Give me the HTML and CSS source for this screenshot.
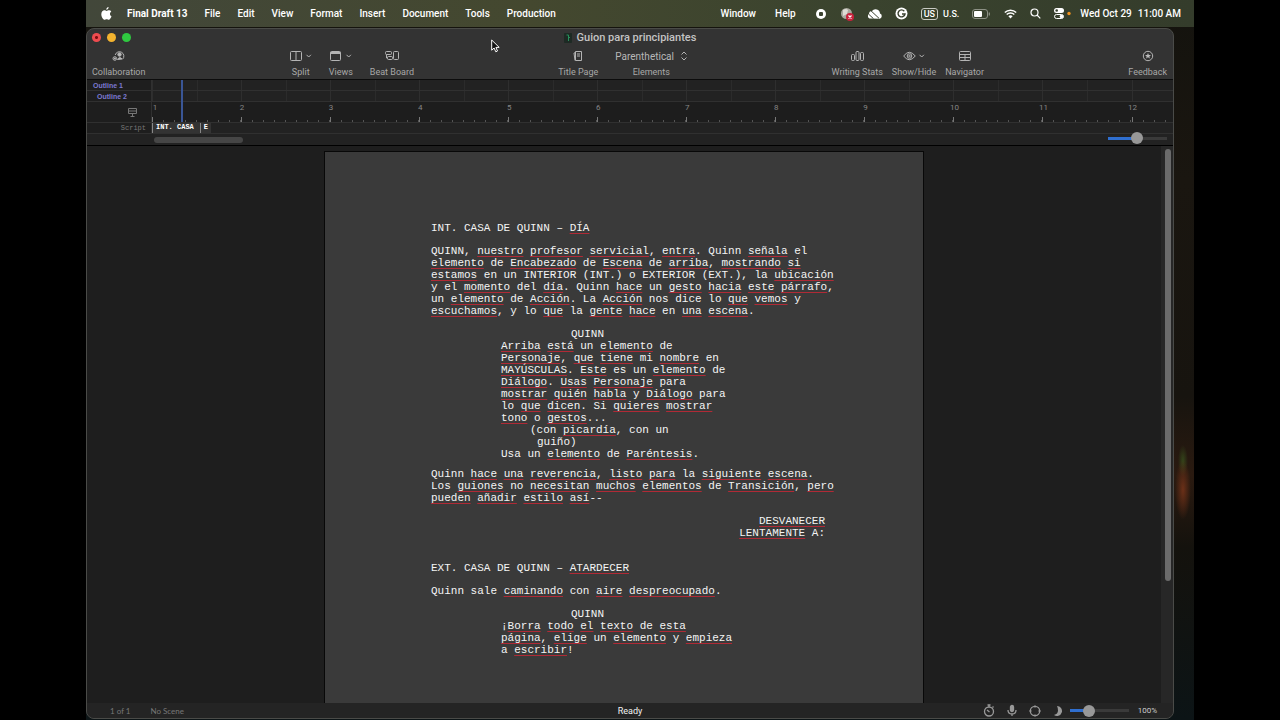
FILE: index.html
```html
<!DOCTYPE html>
<html lang="es">
<head>
  <meta charset="UTF-8">
  <title>Guion para principiantes</title>
  <link rel="stylesheet" href="styles.css">
</head>
<body>
  <div class="desktop">
    <!-- Menu bar -->
    <header class="menubar">
      <nav class="menus">
        <button aria-label="Apple"><svg class="apple" width="11" height="13" viewBox="0 0 11 13"><path d="M7.6 0c.1 1.400-1 2.800-2.300 2.800C5.100 1.500 6.300.2 7.600 0zM10.500 9.200c-.5 1.500-1.600 3.500-2.800 3.500-.8 0-1.100-.5-2.100-.5s-1.300.5-2 .5C2.200 12.700.3 10 .3 7.200.3 4.600 1.900 3.300 3.400 3.300c.9 0 1.600.6 2.200.6.6 0 1.400-.7 2.600-.7.8 0 1.600.4 2.100 1.200-1.900 1.200-1.600 3.900.2 4.800z" fill="#fff"/></svg></button>
        <button class="app">Final Draft 13</button>
        <button>File</button>
        <button>Edit</button>
        <button>View</button>
        <button>Format</button>
        <button>Insert</button>
        <button>Document</button>
        <button>Tools</button>
        <button>Production</button>
      </nav>
      <div class="tray">
        <button>Window</button>
        <button>Help</button>
        <svg width="12" height="12" viewBox="0 0 12 12"><circle cx="6" cy="6" r="5" fill="#fff"/><rect x="4" y="4" width="4" height="4" rx="1" fill="#3b4230"/></svg>
        <svg width="14" height="14" viewBox="0 0 14 14"><circle cx="6.500" cy="6.500" r="5.500" fill="#aaa9a0"/><path d="M3 3q3-2 5 0l-1 4-4 2z" fill="#dedbd4"/><circle cx="10" cy="10" r="4" fill="#c9213b"/><path d="M8.500 8.500l3 3m0-3l-3 3" stroke="#fff" stroke-width="1.200"/></svg>
        <svg width="15" height="12" viewBox="0 0 15 12"><path d="M2.500 10.500A2.600 2.600 0 012 6a3 3 0 013-3 4.500 4.500 0 018 2.500 2.700 2.700 0 01-.5 5.200z" fill="#fff"/><path d="M4 2.800l8 7.500M2 6.500l4.500 4.200" stroke="#3b4230" stroke-width="1"/></svg>
        <svg width="13" height="13" viewBox="0 0 13 13"><circle cx="6.500" cy="6.500" r="6" fill="#fff"/><path d="M9.300 4.200A3.500 3.500 0 1010 7H7" stroke="#3b4230" stroke-width="1.400" fill="none"/></svg>
        <span class="input-source"><b>US</b>U.S.</span>
        <svg width="19" height="10" viewBox="0 0 19 10"><rect x=".5" y=".5" width="15" height="9" rx="2.500" fill="none" stroke="#8d9185"/><rect x="2" y="2" width="8" height="6" rx="1" fill="#fff"/><path d="M17.300 3.500v3" stroke="#8d9185" stroke-width="1.200"/></svg>
        <svg width="13" height="10" viewBox="0 0 13 10"><path d="M.8 3.500a8.200 8.200 0 0111.400 0M2.700 5.500a5.500 5.500 0 017.600 0" stroke="#fff" stroke-width="1.500" fill="none"/><path d="M4.400 7.300a3 3 0 014.200 0L6.500 9.500z" fill="#fff"/></svg>
        <svg width="11" height="11" viewBox="0 0 11 11" fill="none" stroke="#fff" stroke-width="1.200"><circle cx="4.500" cy="4.500" r="3.500"/><path d="M7 7l3.300 3.300"/></svg>
        <svg width="17" height="11" viewBox="0 0 17 11"><rect x="0" y="0" width="10" height="5" rx="2.500" fill="#fff"/><circle cx="2.700" cy="2.500" r="1.300" fill="#3b4230"/><rect x=".5" y="6.500" width="9" height="4" rx="2" fill="none" stroke="#fff"/><circle cx="7.500" cy="8.500" r="1.800" fill="#fff"/><circle cx="15" cy="5.500" r="1.700" fill="#f2931e"/></svg>
        <span class="clock"><span>Wed Oct 29</span><span>11:00 AM</span></span>
      </div>
    </header>

    <main class="window">
      <div class="titlebar">
        <div class="lights">
          <button class="light close" aria-label="Close"></button>
          <button class="light minimize" aria-label="Minimize"></button>
          <button class="light zoom" aria-label="Zoom"></button>
        </div>
        <h1 class="title"><svg width="8" height="10" viewBox="0 0 8 10"><rect width="8" height="10" rx="1" fill="#1d2a24"/><path d="M2.500 2h2v6M4.500 4.500h1.500" stroke="#27905b" fill="none"/></svg>Guion para principiantes</h1>
      </div>

      <!-- Toolbar -->
      <div class="toolbar">
        <div class="tools">
          <button class="tool"><svg width="13" height="12" viewBox="0 0 13 12"><path d="M3.200 5A4.400 4.400 0 1110.500 9.300"/><circle cx="7.500" cy="4.500" r="1.700" fill="#bbb"/><path d="M5.500 9.500q2-3.500 4.500-.5z" fill="#bbb"/><circle cx="2.800" cy="8.500" r="1.800"/><path d="M2.800 7.500v2M1.800 8.500h2"/></svg>Collaboration</button>
        </div>
        <div class="tools">
          <button class="tool"><svg width="22" height="12" viewBox="0 0 22 12"><rect x=".5" y="1.500" width="11" height="9" rx="1"/><path d="M6 1.500v9M16.500 4.800l2.200 2.200 2.200-2.200"/></svg>Split</button>
          <button class="tool"><svg width="22" height="12" viewBox="0 0 22 12"><rect x=".5" y="1.500" width="10" height="9" rx="1"/><path d="M.5 3h10" stroke-width="2"/><path d="M16.500 4.800l2.200 2.200 2.200-2.200"/></svg>Views</button>
          <button class="tool"><svg width="14" height="12" viewBox="0 0 14 12"><rect x=".5" y="1.500" width="6" height="3" rx="1"/><rect x="8.500" y="1.500" width="5" height="8" rx="1"/><rect x="2.500" y="6.500" width="5" height="3" rx="1"/><path d="M1.500 4.500v3.500h1"/></svg>Beat Board</button>
        </div>
        <div class="tools">
          <button class="tool"><svg width="10" height="12" viewBox="0 0 10 12"><path d="M2.500 1.500h6v9h-6zM2.500 2.500l-1.500.5 1 7.500M4 4h3M4 6h3"/></svg>Title Page</button>
          <div class="tool element">
            <span class="picker">
              <select id="element"><option>Parenthetical</option><option>Action</option><option>Dialogue</option></select>
              <svg width="6" height="12" viewBox="0 0 6 12"><path d="M.5 4.500L3 2l2.500 2.500M.5 7.500L3 10l2.500-2.500"/></svg>
            </span>
            <label for="element">Elements</label>
          </div>
        </div>
        <div class="tools stats">
          <button class="tool"><svg width="13" height="12" viewBox="0 0 13 12"><rect x=".5" y="4.500" width="3" height="6" rx="1"/><rect x="5" y="1.500" width="3" height="9" rx="1"/><rect x="9.500" y="2.500" width="3" height="8" rx="1"/></svg>Writing Stats</button>
          <button class="tool"><svg width="22" height="12" viewBox="0 0 22 12"><path d="M.7 6q5.300-7.500 11.600 0-6.300 7.500-11.600 0z"/><circle cx="6.500" cy="6" r="2.300"/><circle cx="6.500" cy="6" r=".8"/><path d="M16.500 4.800l2.200 2.200 2.200-2.200"/></svg>Show/Hide</button>
          <button class="tool"><svg width="12" height="12" viewBox="0 0 12 12"><rect x=".5" y="1.500" width="11" height="9" rx="1"/><path d="M.5 4.500h11M.5 7.500h11M6 4.500v6"/></svg>Navigator</button>
        </div>
        <div class="tools">
          <button class="tool"><svg width="12" height="12" viewBox="0 0 12 12"><circle cx="6" cy="6" r="4.700"/><path d="M6 3l.8 2 2.200.1-1.700 1.300.6 2.100L6 7.300 4.100 8.500l.6-2.100L3 5.100 5.200 5z" fill="#bbb" stroke="none"/></svg>Feedback</button>
        </div>
      </div>

      <!-- Outline timeline -->
      <section class="timeline">
        <div class="lane"><div class="lane-name outline">Outline 1</div><div class="track beats" id="beats1"></div></div>
        <div class="lane"><div class="lane-name outline second">Outline 2</div><div class="track beats" id="beats2"></div></div>
        <div class="lane ruler">
          <div class="lane-name"><svg width="9" height="9" viewBox="0 0 9 9" fill="none" stroke="#777"><path d="M.5.5h8v5h-8zM.5 3h8M4.500 5.500v3M2.500 8.500h4"/></svg></div>
          <div class="track" id="ruler"></div>
        </div>
        <div class="lane">
          <div class="lane-name script">Script</div>
          <div class="track scenes"><span class="scene wide">INT. CASA</span><span class="scene">E</span></div>
        </div>
        <div class="timeline-foot">
          <div class="hscroll"></div>
          <input class="slider" type="range" min="0" max="100" value="48" aria-label="Timeline zoom">
        </div>
        <div class="playhead"></div>
      </section>

      <div class="editor">
        <article class="paper">
          <p class="heading">INT. CASA DE QUINN – <u>DÍA</u></p>
          <p class="action">QUINN, <u>nuestro</u> <u>profesor</u> <u>servicial</u>, <u>entra</u>. Quinn <u>señala</u> el<br>
            <u>elemento</u> de <u>Encabezado</u> de <u>Escena</u> de <u>arriba</u>, <u>mostrando</u> <u>si</u><br>
            <u>estamos</u> en un INTERIOR (INT.) o EXTERIOR (EXT.), la <u>ubicación</u><br>
            y el <u>momento</u> del <u>día</u>. Quinn <u>hace</u> un <u>gesto</u> <u>hacia</u> <u>este</u> <u>párrafo</u>,<br>
            un <u>elemento</u> de <u>Acción</u>. La <u>Acción</u> nos dice lo <u>que</u> <u>vemos</u> y<br>
            <u>escuchamos</u>, y lo <u>que</u> la <u>gente</u> <u>hace</u> en <u>una</u> <u>escena</u>.</p>
          <p class="character">QUINN</p>
          <p class="dialogue"><u>Arriba</u> <u>está</u> un <u>elemento</u> de<br>
            <u>Personaje</u>, <u>que</u> <u>tiene</u> mi <u>nombre</u> en<br>
            <u>MAYÚSCULAS</u>. <u>Este</u> es un <u>elemento</u> de<br>
            <u>Diálogo</u>. <u>Usas</u> <u>Personaje</u> para<br>
            <u>mostrar</u> <u>quién</u> <u>habla</u> y <u>Diálogo</u> para<br>
            lo <u>que</u> <u>dicen</u>. Si <u>quieres</u> <u>mostrar</u><br>
            <u>tono</u> o <u>gestos</u>...</p>
          <p class="parenthetical">(con <u>picardía</u>, con un<br>guiño)</p>
          <p class="dialogue last">Usa un <u>elemento</u> de <u>Paréntesis</u>.</p>
          <p class="action">Quinn <u>hace</u> <u>una</u> <u>reverencia</u>, <u>listo</u> <u>para</u> la <u>siguiente</u> <u>escena</u>.<br>
            Los <u>guiones</u> no <u>necesitan</u> <u>muchos</u> <u>elementos</u> de <u>Transición</u>, <u>pero</u><br>
            <u>pueden</u> <u>añadir</u> <u>estilo</u> <u>así</u>--</p>
          <p class="transition"><u>DESVANECER</u><br><u>LENTAMENTE</u> A:</p>
          <p class="heading">EXT. CASA DE QUINN – <u>ATARDECER</u></p>
          <p class="action">Quinn sale <u>caminando</u> con <u>aire</u> <u>despreocupado</u>.</p>
          <p class="character">QUINN</p>
          <p class="dialogue">¡<u>Borra</u> <u>todo</u> <u>el</u> <u>texto</u> de <u>esta</u><br>
            <u>página</u>, <u>elige</u> un <u>elemento</u> y <u>empieza</u><br>
            a <u>escribir</u>!</p>
        </article>
        <div class="vscroll"><div class="vthumb"></div></div>
      </div>

      <footer class="status">
        <div class="status-left"><span>1 of 1</span><span>No Scene</span></div>
        <div class="ready">Ready</div>
        <div class="status-right">
          <button aria-label="Timer"><svg width="12" height="13" viewBox="0 0 12 13" fill="none" stroke="#999" stroke-width="1.300"><circle cx="6" cy="7.500" r="4.500"/><path d="M6 3V1M4.500 1h3M9.500 3.500l1-1M4 6l2.500 2"/></svg></button>
          <button aria-label="Dictation"><svg width="12" height="13" viewBox="0 0 12 13" fill="none" stroke="#999" stroke-width="1.300"><rect x="4.500" y="1.500" width="3" height="6" rx="1.500" fill="#999"/><path d="M2 6q0 4 4 4t4-4M6 10v2"/></svg></button>
          <button aria-label="Focus"><svg width="12" height="13" viewBox="0 0 12 13" fill="none" stroke="#999" stroke-width="1.300"><circle cx="6" cy="7" r="4.700"/><path d="M6 1.500v2M6 10.500v2M.5 7h2M9.500 7h2"/></svg></button>
          <button aria-label="Night mode"><svg width="12" height="13" viewBox="0 0 12 13"><path d="M5 2a5 5 0 11-3 9q4-1 4-4.500Q6 4 5 2z" fill="#999"/></svg></button>
          <input class="slider zoom-slider" type="range" min="0" max="100" value="28" aria-label="Zoom">
          <span class="percent">100%</span>
        </div>
      </footer>
    </main>

    <svg class="cursor" width="9" height="14" viewBox="0 0 9 14"><path d="M.7 1v10.200l2.400-2.200 1.700 3.800 1.700-.8-1.600-3.600h3.300z" fill="#111" stroke="#fff"/></svg>
  </div>

  <script>
    const bars = 12;

    function fillTrack(id, numbered) {
      const track = document.getElementById(id);
      for (let i = 1; i <= bars; i++) {
        const bar = document.createElement("div");
        bar.classList.add("bar");
        if (numbered) {
          const num = document.createElement("span");
          num.textContent = i;
          bar.appendChild(num);
        }
        track.appendChild(bar);
      }
    }

    fillTrack("beats1", false);
    fillTrack("beats2", false);
    fillTrack("ruler", true);
  </script>
</body>
</html>
```
FILE: styles.css
```css
* {
  box-sizing: border-box;
}

body {
  margin: 0;
  background: #000;
  color: #fff;
  font-family: Roboto, "Liberation Sans", sans-serif;
  font-size: 10px;
  overflow: hidden;
}

button {
  padding: 0;
  border: none;
  background: none;
  color: inherit;
  font: inherit;
}

svg {
  display: block;
  flex-shrink: 0;
}

.desktop {
  position: relative;
  display: flex;
  flex-direction: column;
  height: 100vh;
  margin: 0 86px;
  background:
    radial-gradient(8px 30px at 99% 68%, #6b3018, transparent),
    radial-gradient(5px 16px at 99% 64%, #33441a, transparent),
    linear-gradient(180deg, #14130e 0%, #1a1610 25%, #17140f 55%, #2a1a10 66%, #14120d 76%, #0c1416 100%);
}

.menubar {
  display: flex;
  justify-content: space-between;
  align-items: center;
  height: 27px;
  padding: 0 13px 0 15px;
  background: linear-gradient(90deg, #42473a, #44482f 40%, #3a432e 70%, #343c2b);
  font-weight: 500;
}

.menus {
  display: flex;
  align-items: center;
  gap: 17px;
}

.menus .app {
  font-weight: 700;
  margin-left: -2px;
}

.tray {
  display: flex;
  align-items: center;
  gap: 13px;
}

.tray button {
  margin-right: 6px;
}

.input-source {
  display: flex;
  align-items: center;
  gap: 5px;
  font-size: 9px;
}

.input-source b {
  padding: 0 2px;
  border: 1px solid #c9cbc4;
  border-radius: 3px;
  font-weight: 500;
}

.clock {
  display: flex;
  gap: 6px;
  margin-left: -4px;
}

.window {
  display: flex;
  flex-direction: column;
  flex: 1;
  min-height: 0;
  margin: 1px 20px 1px 0;
  border: 1px solid #4a4b48;
  border-radius: 8px;
  background: #333;
  overflow: hidden;
}

.titlebar {
  display: grid;
  grid-template-columns: 1fr auto 1fr;
  align-items: center;
  height: 17px;
  padding: 0 5px;
}

.lights {
  display: flex;
  gap: 6px;
}

.light {
  width: 9px;
  height: 9px;
  border-radius: 50%;
}

.close {
  background: radial-gradient(#7a0b10 0 1px, #ee4b4f 2px);
}

.minimize {
  background: #f3b32f;
}

.light.zoom {
  background: #2fc840;
}

.title {
  display: flex;
  align-items: center;
  gap: 5px;
  margin: 0;
  color: #c4c4c4;
  font-size: 11px;
  font-weight: 500;
}

/* Toolbar */
.toolbar {
  display: flex;
  justify-content: space-between;
  height: 34px;
  padding: 4px 6px 0 5px;
  border-bottom: 1px solid #0c0c0c;
  color: #a8a8a8;
  font-size: 9px;
}

.tools {
  display: flex;
  gap: 17px;
}

.tools.stats {
  gap: 9px;
}

.tool {
  display: flex;
  flex-direction: column;
  align-items: center;
  gap: 5px;
  height: 28px;
  line-height: 11px;
}

.tool svg {
  fill: none;
  stroke: #b4b4b4;
}

.picker {
  display: flex;
  align-items: center;
  gap: 7px;
  height: 12px;
}

.picker select {
  appearance: none;
  padding: 0;
  border: none;
  background: none;
  color: #b8b8b8;
  font-family: inherit;
  font-size: 10px;
}

/* Timeline */
.timeline {
  position: relative;
  background: #222;
  border-bottom: 1px solid #000;
}

.lane {
  display: flex;
  height: 11px;
  border-bottom: 1px solid #303030;
}

.ruler {
  height: 21px;
  background: #1d1d1d;
}

.lane-name {
  display: flex;
  align-items: center;
  width: 65px;
  flex-shrink: 0;
  border-right: 1px solid #303030;
  background: #1e1e1e;
}

.outline {
  padding-left: 6px;
  color: #7b79d0;
  font: bold 7px "Liberation Sans", sans-serif;
}

.outline.second {
  padding-left: 10px;
}

.ruler .lane-name {
  padding-left: 41px;
}

.script {
  justify-content: flex-end;
  padding-right: 5px;
  color: #777;
  font: 7px "Liberation Mono", monospace;
}

.track {
  display: flex;
  flex: 1;
  min-width: 0;
}

.bar {
  flex: 100 0 0;
  min-width: 0;
}

.bar:last-child {
  flex-grow: 46;
}

.beats .bar {
  border-left: 1px solid #2e2e2e;
  background: linear-gradient(#2b2b2b, #2b2b2b) 50% 0 / 1px 100% no-repeat;
}

.beats .bar:last-child {
  background: none;
}

#ruler .bar {
  border-left: 1px solid transparent;
  background:
    linear-gradient(#777, #777) 0 100% / 1px 5px no-repeat border-box,
    repeating-linear-gradient(90deg, #555 0 1px, transparent 1px 11px) 0 100% / 100% 2px no-repeat border-box;
}

.bar span {
  display: block;
  width: 12px;
  margin-left: -6px;
  color: #858585;
  font-size: 8px;
  line-height: 12px;
  text-align: center;
}

.bar:first-child span {
  margin-left: -4px;
}

.scene {
  padding: 0 3px;
  border-left: 1px solid #888;
  background: #333;
  font: bold 7px/9px "Liberation Mono", monospace;
}

.scene.wide {
  padding-right: 6px;
}

.timeline-foot {
  display: flex;
  justify-content: space-between;
  height: 11px;
  padding: 0 6px 0 67px;
}

.hscroll {
  width: 89px;
  height: 6px;
  margin-top: 3px;
  border-radius: 3px;
  background: #464646;
}

.slider {
  appearance: none;
  width: 59px;
  height: 12px;
  margin: 0;
  background: linear-gradient(90deg, #2f6fd0 48%, #3a3a3a 48%) 0 50% / 100% 3px no-repeat;
}

.timeline-foot .slider {
  margin-top: -2px;
}

.slider::-webkit-slider-thumb {
  appearance: none;
  width: 12px;
  height: 12px;
  border-radius: 50%;
  background: #989898;
}

.playhead {
  position: absolute;
  top: 0;
  left: 94px;
  width: 2px;
  height: 42px;
  background: #3a5696;
}

/* Script page */
.editor {
  display: flex;
  justify-content: center;
  flex: 1;
  min-height: 0;
  background: #1e1e1e;
}

.paper {
  width: 600px;
  margin: 5px auto 0;
  padding: 70px 98px 0 106px;
  border: 1px solid #080808;
  border-bottom: none;
  background: #3a3a3a;
  color: #f4f4f4;
  font: 11px/12px "Liberation Mono", monospace;
}

.paper p {
  margin: 0 0 11px;
  white-space: nowrap;
}

.paper u {
  text-decoration: underline 1px #b02a36;
  text-underline-offset: 2px;
  text-decoration-skip-ink: none;
}

.paper .character {
  margin: 0 0 0 140px;
}

.paper .dialogue {
  margin: 0 0 0 70px;
}

.paper .dialogue.last {
  margin-bottom: 8px;
}

.paper .parenthetical {
  margin: 0 0 0 106px;
  text-indent: -7px;
}

.paper .transition {
  margin-bottom: 23px;
  text-align: right;
}

.vscroll {
  width: 12px;
  padding: 3px 2px 0 4px;
  background: #272727;
}

.vthumb {
  height: 78%;
  border-radius: 3px;
  background: #6b6b6b;
}

/* Status bar */
.status {
  display: grid;
  grid-template-columns: 1fr auto 1fr;
  align-items: center;
  height: 15px;
  padding: 0 16px;
  background: #242424;
  color: #777;
  font-size: 8px;
}

.status-left {
  display: flex;
  gap: 20px;
  padding-left: 7px;
  font-family: Lato, sans-serif;
}

.ready {
  color: #f2f2f2;
  font-size: 9px;
}

.status-right {
  display: flex;
  justify-content: flex-end;
  align-items: center;
  gap: 11px;
}

.zoom-slider {
  margin: 0 -2px 0 -5px;
  background-image: linear-gradient(90deg, #2f6fd0 28%, #3a3a3a 28%);
}

.percent {
  color: #ccc;
}

.cursor {
  position: absolute;
  top: 39px;
  left: 405px;
}
```
